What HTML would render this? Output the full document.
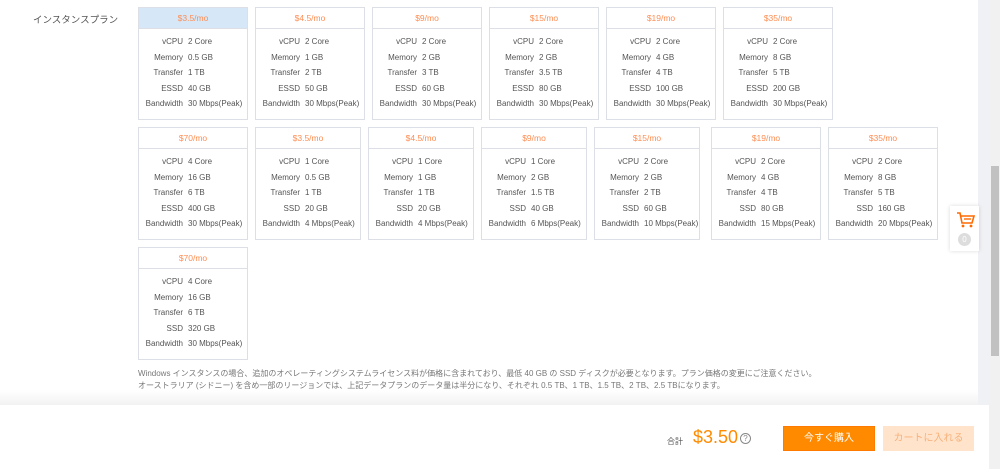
<!DOCTYPE html><html><head><meta charset="utf-8"><style>
*{margin:0;padding:0;box-sizing:border-box}
body{width:1000px;height:469px;overflow:hidden;background:#fff;font-family:"Liberation Sans","Noto Sans CJK JP",sans-serif;position:relative}
.title{position:absolute;left:33px;top:12px;font-size:9.5px;color:#555}
.card{position:absolute;width:110px;height:113px;border:1px solid #dcdfe6;background:#fff}
.card .h{height:21px;border-bottom:1px solid #dcdfe6;text-align:center;font-size:8.5px;line-height:20px;color:#ff8d52}
.card.sel .h{background:#d6e7f8}
.card .r{position:absolute;font-size:8px;color:#555;white-space:nowrap}
.card .r b{font-weight:normal;display:inline-block;width:44px;text-align:right;margin-right:5px}
.note{position:absolute;left:138px;font-size:8px;color:#777;white-space:nowrap}
.grad{position:absolute;left:0;top:390px;width:978px;height:15px;background:linear-gradient(#fff,#f2f2f2)}
.foot{position:absolute;left:0;top:405px;width:989px;height:64px;background:#fff}
.strip{position:absolute;left:978px;top:0;width:11px;height:405px;background:#f0f1f4}
.sb{position:absolute;left:989px;top:0;width:11px;height:469px;background:#f1f1f1}
.thumb{position:absolute;left:991px;top:166px;width:8px;height:190px;background:#c1c1c1}
</style></head><body>
<div class="strip"></div>
<div class="grad"></div>
<div class="title">インスタンスプラン</div>
<div id="c"></div>
<div class="note" style="top:368px">Windows インスタンスの場合、追加のオペレーティングシステムライセンス料が価格に含まれており、最低 40 GB の SSD ディスクが必要となります。プラン価格の変更にご注意ください。</div>
<div class="note" style="top:380px">オーストラリア (シドニー) を含め一部のリージョンでは、上記データプランのデータ量は半分になり、それぞれ 0.5 TB、1 TB、1.5 TB、2 TB、2.5 TBになります。</div>
<div style="position:absolute;left:950px;top:206px;width:29px;height:45px;background:#fff;box-shadow:0 0 4px rgba(0,0,0,.15)">
<svg width="29" height="22" viewBox="0 0 29 22" style="position:absolute;top:3px;left:0"><path d="M7 4h3l2 10h10l2-7H11" fill="none" stroke="#ff6a00" stroke-width="1.6"/><path d="M14 10h7" stroke="#ff6a00" stroke-width="1.4"/><circle cx="13" cy="17" r="1.4" fill="#ff6a00"/><circle cx="21" cy="17" r="1.4" fill="#ff6a00"/></svg>
<div style="position:absolute;left:8px;top:27px;width:13px;height:13px;border-radius:50%;background:#ddd;color:#fff;font-size:8px;text-align:center;line-height:13px">0</div></div>
<div class="foot">
<div style="position:absolute;left:667px;top:31px;font-size:8px;color:#555">合計</div>
<div style="position:absolute;left:693px;top:22px;font-size:18px;color:#ff8a00">$3.50</div>
<div style="position:absolute;left:740px;top:28px;width:11px;height:11px;border:1px solid #888;border-radius:50%;font-size:8px;color:#888;text-align:center;line-height:9px">?</div>
<div style="position:absolute;left:783px;top:21px;width:92px;height:25px;background:#ff8a00;border:1px solid #ff7a00;color:#fff;font-size:10px;text-align:center;line-height:23px">今すぐ購入</div>
<div style="position:absolute;left:883px;top:21px;width:91px;height:25px;background:#ffe4cb;color:#f8b07a;font-size:10px;text-align:center;line-height:25px">カートに入れる</div>
</div>
<div class="sb"></div><div class="thumb"></div>
<script>
var L=["vCPU","Memory","Transfer","ESSD","Bandwidth"],L2=["vCPU","Memory","Transfer","SSD","Bandwidth"];
var cards=[
[138,7,110,"$3.5/mo",L,["2 Core","0.5 GB","1 TB","40 GB","30 Mbps(Peak)"],1],
[255,7,110,"$4.5/mo",L,["2 Core","1 GB","2 TB","50 GB","30 Mbps(Peak)"]],
[372,7,110,"$9/mo",L,["2 Core","2 GB","3 TB","60 GB","30 Mbps(Peak)"]],
[489,7,110,"$15/mo",L,["2 Core","2 GB","3.5 TB","80 GB","30 Mbps(Peak)"]],
[606,7,110,"$19/mo",L,["2 Core","4 GB","4 TB","100 GB","30 Mbps(Peak)"]],
[723,7,110,"$35/mo",L,["2 Core","8 GB","5 TB","200 GB","30 Mbps(Peak)"]],
[138,127,110,"$70/mo",L,["4 Core","16 GB","6 TB","400 GB","30 Mbps(Peak)"]],
[255,127,106,"$3.5/mo",L2,["1 Core","0.5 GB","1 TB","20 GB","4 Mbps(Peak)"]],
[368,127,106,"$4.5/mo",L2,["1 Core","1 GB","1 TB","20 GB","4 Mbps(Peak)"]],
[481,127,106,"$9/mo",L2,["1 Core","2 GB","1.5 TB","40 GB","6 Mbps(Peak)"]],
[594,127,106,"$15/mo",L2,["2 Core","2 GB","2 TB","60 GB","10 Mbps(Peak)"]],
[711,127,110,"$19/mo",L2,["2 Core","4 GB","4 TB","80 GB","15 Mbps(Peak)"]],
[828,127,110,"$35/mo",L2,["2 Core","8 GB","5 TB","160 GB","20 Mbps(Peak)"]],
[138,247,110,"$70/mo",L2,["4 Core","16 GB","6 TB","320 GB","30 Mbps(Peak)"]]];
var h="";cards.forEach(function(c){h+='<div class="card'+(c[6]?' sel':'')+'" style="left:'+c[0]+'px;top:'+c[1]+'px;width:'+c[2]+'px"><div class="h">'+c[3]+'</div>';
for(var i=0;i<5;i++)h+='<div class="r" style="left:0;top:'+(29+i*15.5)+'px"><b>'+c[4][i]+'</b>'+c[5][i]+'</div>';h+='</div>';});
document.getElementById("c").innerHTML=h;
</script>
</body></html>
